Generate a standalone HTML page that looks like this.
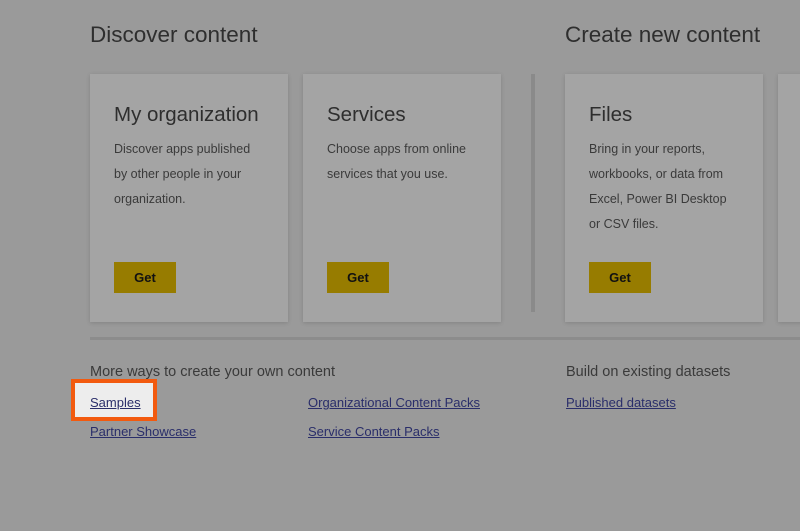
<!DOCTYPE html>
<html><head><style>
body{margin:0;width:800px;height:531px;background:#9a9a9a;font-family:"Liberation Sans",sans-serif;position:relative;overflow:hidden;color:#333}
.h{position:absolute;top:22px;font-size:22.5px;color:#2e2e2e}
.card{position:absolute;top:74px;width:198px;height:248px;background:#a4a4a4;box-shadow:0 1px 4px rgba(0,0,0,.15)}
.card .t{position:absolute;left:24px;top:29px;font-size:20.5px;color:#2e2e2e}
.card .d{position:absolute;left:24px;top:63px;white-space:nowrap;font-size:12.5px;line-height:25px;color:#3a3a3a}
.card .b{position:absolute;left:24px;top:188px;width:62px;height:31px;background:#977c00;font-weight:bold;font-size:13px;color:#111;text-align:center;line-height:31px}
a{position:absolute;font-size:13px;color:#2a2e6a;text-decoration:underline}
.m{position:absolute;top:364px;font-size:14.5px;color:#3a3a3a}
</style></head><body>
<div class="h" style="left:90px">Discover content</div>
<div class="h" style="left:565px">Create new content</div>
<div class="card" style="left:90px"><div class="t">My organization</div><div class="d">Discover apps published<br>by other people in your<br>organization.</div><div class="b">Get</div></div>
<div class="card" style="left:303px"><div class="t">Services</div><div class="d">Choose apps from online<br>services that you use.</div><div class="b">Get</div></div>
<div style="position:absolute;left:531px;top:74px;width:4px;height:238px;background:#8a8a8a"></div>
<div class="card" style="left:565px"><div class="t">Files</div><div class="d">Bring in your reports,<br>workbooks, or data from<br>Excel, Power BI Desktop<br>or CSV files.</div><div class="b">Get</div></div>
<div class="card" style="left:778px"></div>
<div style="position:absolute;left:90px;top:337px;width:710px;height:3px;background:#8c8c8c"></div>
<div class="m" style="left:90px">More ways to create your own content</div>
<div class="m" style="left:566px">Build on existing datasets</div>
<div style="position:absolute;left:71px;top:379px;width:86px;height:42px;border:4px solid #f25a0f;background:#ededed;box-sizing:border-box"></div>
<a style="left:90px;top:395px">Samples</a>
<a style="left:90px;top:424px">Partner Showcase</a>
<a style="left:308px;top:395px">Organizational Content Packs</a>
<a style="left:308px;top:424px">Service Content Packs</a>
<a style="left:566px;top:395px">Published datasets</a>
</body></html>
